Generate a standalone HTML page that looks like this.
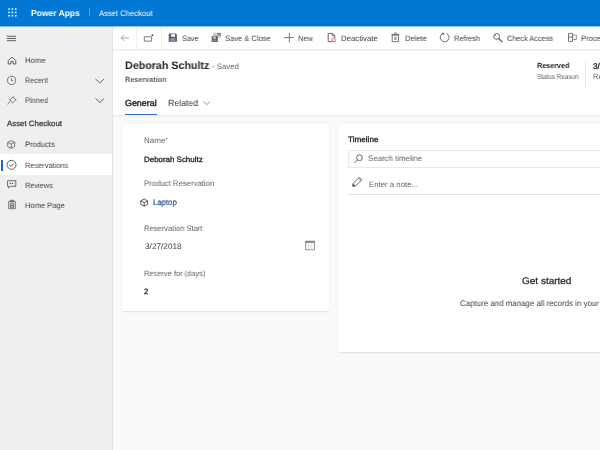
<!DOCTYPE html>
<html><head><meta charset="utf-8"><style>
html,body{margin:0;padding:0;width:600px;height:450px;overflow:hidden;background:#faf9f8}
body{position:relative;font-family:"Liberation Sans",sans-serif}
.t{position:absolute;white-space:nowrap;will-change:transform;text-rendering:geometricPrecision}
.r{position:absolute}
.i{position:absolute;overflow:visible}
</style></head><body>
<div class="r" style="left:0px;top:0px;width:600px;height:26px;background:#0078d4;"></div>
<div class="t" id="hdr_pa" style="left:30.71px;top:9.00px;font-size:8.78px;line-height:8.78px;color:#fff;font-weight:bold;transform:scaleX(0.9672);transform-origin:0 0;">Power Apps</div>
<div class="r" style="left:89px;top:7.5px;width:1px;height:8.5px;background:rgba(255,255,255,.3);"></div>
<div class="t" id="hdr_ac" style="left:98.72px;top:10.01px;font-size:8.02px;line-height:8.02px;color:#fff;font-weight:normal;transform:scaleX(0.9526);transform-origin:0 0;">Asset Checkout</div>
<div class="r" style="left:0px;top:26px;width:112px;height:424px;background:#efefef;"></div>
<div class="r" style="left:112px;top:26px;width:1px;height:424px;background:#e3e3e3;"></div>
<div class="t" id="nav_home" style="left:24.90px;top:56.91px;font-size:8.01px;line-height:8.01px;color:#3f3f3f;font-weight:normal;transform:scaleX(0.9667);transform-origin:0 0;">Home</div>
<div class="t" id="nav_recent" style="left:24.61px;top:77.00px;font-size:8.01px;line-height:8.01px;color:#3f3f3f;font-weight:normal;transform:scaleX(0.8996);transform-origin:0 0;">Recent</div>
<div class="t" id="nav_pinned" style="left:24.57px;top:97.00px;font-size:8.01px;line-height:8.01px;color:#3f3f3f;font-weight:normal;transform:scaleX(0.9395);transform-origin:0 0;">Pinned</div>
<div class="t" id="nav_grp" style="left:7.16px;top:120.01px;font-size:7.68px;line-height:7.68px;color:#3f3f3f;font-weight:normal;transform:scaleX(1.0245);transform-origin:0 0;-webkit-text-stroke:0.3px #3f3f3f;">Asset Checkout</div>
<div class="t" id="nav_products" style="left:24.50px;top:141.00px;font-size:7.85px;line-height:7.85px;color:#3f3f3f;font-weight:normal;transform:scaleX(0.9620);transform-origin:0 0;">Products</div>
<div class="r" style="left:0px;top:154px;width:112px;height:21px;background:#fff;"></div>
<div class="r" style="left:1px;top:159.5px;width:2px;height:11px;background:#0f6cbd;"></div>
<div class="t" id="nav_res" style="left:24.92px;top:162.01px;font-size:7.75px;line-height:7.75px;color:#3f3f3f;font-weight:normal;transform:scaleX(0.9577);transform-origin:0 0;">Reservations</div>
<div class="t" id="nav_reviews" style="left:24.71px;top:182.01px;font-size:7.75px;line-height:7.75px;color:#3f3f3f;font-weight:normal;transform:scaleX(0.9474);transform-origin:0 0;">Reviews</div>
<div class="t" id="nav_homepage" style="left:24.71px;top:202.01px;font-size:7.75px;line-height:7.75px;color:#3f3f3f;font-weight:normal;transform:scaleX(0.9753);transform-origin:0 0;">Home Page</div>
<div class="r" style="left:113px;top:26px;width:487px;height:23px;background:#fff;"></div>
<div class="r" style="left:113px;top:49px;width:487px;height:1px;background:#ebeae9;"></div>
<div class="r" style="left:113px;top:50px;width:487px;height:1px;background:#f6f5f4;"></div>
<div class="r" style="left:136px;top:26px;width:1px;height:23px;background:#f0efee;"></div>
<div class="r" style="left:160.5px;top:26px;width:1px;height:23px;background:#f0efee;"></div>
<div class="t" id="cmd_save" style="left:182.24px;top:35.00px;font-size:7.80px;line-height:7.80px;color:#3f3f3f;font-weight:normal;transform:scaleX(0.9298);transform-origin:0 0;">Save</div>
<div class="t" id="cmd_sc" style="left:225.19px;top:35.00px;font-size:7.80px;line-height:7.80px;color:#3f3f3f;font-weight:normal;transform:scaleX(0.9637);transform-origin:0 0;">Save &amp; Close</div>
<div class="t" id="cmd_new" style="left:298.21px;top:35.00px;font-size:7.80px;line-height:7.80px;color:#3f3f3f;font-weight:normal;transform:scaleX(0.9557);transform-origin:0 0;">New</div>
<div class="t" id="cmd_deact" style="left:340.92px;top:35.00px;font-size:7.80px;line-height:7.80px;color:#3f3f3f;font-weight:normal;transform:scaleX(0.9984);transform-origin:0 0;">Deactivate</div>
<div class="t" id="cmd_delete" style="left:404.55px;top:35.00px;font-size:7.80px;line-height:7.80px;color:#3f3f3f;font-weight:normal;transform:scaleX(0.9707);transform-origin:0 0;">Delete</div>
<div class="t" id="cmd_refresh" style="left:453.76px;top:35.00px;font-size:7.80px;line-height:7.80px;color:#3f3f3f;font-weight:normal;transform:scaleX(0.9498);transform-origin:0 0;">Refresh</div>
<div class="t" id="cmd_check" style="left:507.11px;top:35.00px;font-size:7.80px;line-height:7.80px;color:#3f3f3f;font-weight:normal;transform:scaleX(0.9382);transform-origin:0 0;">Check Access</div>
<div class="t" id="cmd_proc" style="left:580.97px;top:35.00px;font-size:7.80px;line-height:7.80px;color:#3f3f3f;font-weight:normal;transform:scaleX(0.9615);transform-origin:0 0;">Process</div>
<div class="r" style="left:113px;top:51px;width:487px;height:64.5px;background:#fff;"></div>
<div class="t" id="title" style="left:124.91px;top:61.00px;font-size:10.93px;line-height:10.93px;color:#242424;font-weight:bold;transform:scaleX(0.9793);transform-origin:0 0;">Deborah Schultz</div>
<div class="t" id="saved" style="left:212.29px;top:63.00px;font-size:7.84px;line-height:7.84px;color:#616161;font-weight:normal;transform:scaleX(0.9840);transform-origin:0 0;">- Saved</div>
<div class="t" id="entity" style="left:125.47px;top:76.01px;font-size:7.50px;line-height:7.50px;color:#5e5e5e;font-weight:bold;transform:scaleX(0.9680);transform-origin:0 0;">Reservation</div>
<div class="t" id="reserved" style="left:536.68px;top:62.11px;font-size:7.51px;line-height:7.51px;color:#242424;font-weight:bold;transform:scaleX(0.9606);transform-origin:0 0;">Reserved</div>
<div class="t" id="statusreason" style="left:536.64px;top:74.01px;font-size:7.18px;line-height:7.18px;color:#616161;font-weight:normal;transform:scaleX(0.8833);transform-origin:0 0;">Status Reason</div>
<div class="r" style="left:585px;top:60.5px;width:1px;height:27px;background:#e6e6e6;"></div>
<div class="t" id="x3" style="left:592.60px;top:62.35px;font-size:8.30px;line-height:8.30px;color:#242424;font-weight:normal;-webkit-text-stroke:0.3px #242424;">3/27/2018</div>
<div class="t" id="xre" style="left:592.80px;top:73.14px;font-size:7.60px;line-height:7.60px;color:#616161;font-weight:normal;">Reservation Start</div>
<div class="t" id="tab_general" style="left:124.87px;top:99.01px;font-size:8.85px;line-height:8.85px;color:#242424;font-weight:normal;transform:scaleX(1.0047);transform-origin:0 0;-webkit-text-stroke:0.4px #242424;">General</div>
<div class="t" id="tab_related" style="left:168.09px;top:99.01px;font-size:9.02px;line-height:9.02px;color:#383838;font-weight:normal;transform:scaleX(0.9732);transform-origin:0 0;">Related</div>
<div class="r" style="left:125px;top:114.2px;width:32px;height:1.3px;background:#2f6fc0;"></div>
<div class="r" style="left:113px;top:115.5px;width:487px;height:334.5px;background:#faf9f8;"></div>
<div class="r" style="left:113px;top:115px;width:487px;height:1px;background:#ecebea;"></div>
<div class="r" style="left:113px;top:116px;width:487px;height:1px;background:#f3f2f1;"></div>
<div class="r" style="left:121.5px;top:124.2px;width:207.5px;height:186.8px;background:#fff;box-shadow:0 0.6px 1.6px rgba(0,0,0,.11),0 0 0.6px rgba(0,0,0,.07);border-radius:1.5px"></div>
<div class="t" id="f_name" style="left:143.64px;top:137.00px;font-size:7.96px;line-height:7.96px;color:#616161;font-weight:normal;transform:scaleX(1.0062);transform-origin:0 0;">Name<span style="color:#a0525a;font-size:6.5px;vertical-align:1px">*</span></div>
<div class="t" id="f_nameval" style="left:144.03px;top:156.02px;font-size:7.78px;line-height:7.78px;color:#242424;font-weight:normal;transform:scaleX(1.0207);transform-origin:0 0;-webkit-text-stroke:0.3px #242424;">Deborah Schultz</div>
<div class="t" id="f_prod" style="left:143.66px;top:180.01px;font-size:8.01px;line-height:8.01px;color:#616161;font-weight:normal;transform:scaleX(0.9708);transform-origin:0 0;">Product Reservation</div>
<div class="t" id="f_laptop" style="left:153.15px;top:199.01px;font-size:8.16px;line-height:8.16px;color:#234e96;font-weight:normal;transform:scaleX(0.9536);transform-origin:0 0;-webkit-text-stroke:0.2px #234e96;">Laptop</div>
<div class="t" id="f_rs" style="left:143.52px;top:225.01px;font-size:7.89px;line-height:7.89px;color:#616161;font-weight:normal;transform:scaleX(0.9593);transform-origin:0 0;">Reservation Start</div>
<div class="t" id="f_date" style="left:145.37px;top:243.01px;font-size:8.22px;line-height:8.22px;color:#424242;font-weight:normal;transform:scaleX(1.0031);transform-origin:0 0;">3/27/2018</div>
<div class="t" id="f_rf" style="left:143.56px;top:270.00px;font-size:7.72px;line-height:7.72px;color:#616161;font-weight:normal;transform:scaleX(0.9656);transform-origin:0 0;">Reserve for (days)</div>
<div class="t" id="f_2" style="left:144.48px;top:288.01px;font-size:7.78px;line-height:7.78px;color:#242424;font-weight:normal;transform:scaleX(0.9615);transform-origin:0 0;-webkit-text-stroke:0.3px #242424;">2</div>
<div class="r" style="left:338px;top:124px;width:270px;height:228px;background:#fff;box-shadow:0 0.6px 1.6px rgba(0,0,0,.11),0 0 0.6px rgba(0,0,0,.07);border-radius:1.5px"></div>
<div class="t" id="tl_title" style="left:348.35px;top:136.01px;font-size:7.83px;line-height:7.83px;color:#242424;font-weight:normal;transform:scaleX(1.0400);transform-origin:0 0;-webkit-text-stroke:0.3px #242424;">Timeline</div>
<div class="r" style="left:347.5px;top:149.5px;width:260px;height:18px;background:#fff;box-sizing:border-box;border:1px solid #e8e8e8"></div>
<div class="t" id="tl_search" style="left:368.15px;top:154.91px;font-size:8.10px;line-height:8.10px;color:#616161;font-weight:normal;transform:scaleX(0.9704);transform-origin:0 0;">Search timeline</div>
<div class="t" id="tl_note" style="left:368.75px;top:181.06px;font-size:7.80px;line-height:7.80px;color:#616161;font-weight:normal;transform:scaleX(0.9924);transform-origin:0 0;">Enter a note...</div>
<div class="r" style="left:347.5px;top:194px;width:260px;height:1px;background:#e0e0e0;"></div>
<div class="t" id="gs" style="left:522.13px;top:277.01px;font-size:9.53px;line-height:9.53px;color:#242424;font-weight:normal;transform:scaleX(1.0500);transform-origin:0 0;-webkit-text-stroke:0.25px #242424;">Get started</div>
<div class="t" id="cap" style="left:460.29px;top:300.00px;font-size:8.23px;line-height:8.23px;color:#424242;font-weight:normal;transform:scaleX(0.9615);transform-origin:0 0;">Capture and manage all records in your timeline.</div>
<div class="r" style="left:0px;top:27px;width:112px;height:2px;background:#f5f6f7;"></div>
<div class="r" style="left:0px;top:25px;width:600px;height:1px;background:#066dc2;"></div>
<div class="r" style="left:0px;top:26px;width:600px;height:1px;background:rgba(0,120,212,.42);"></div>
<div class="r" style="left:0px;top:27px;width:600px;height:1px;background:rgba(0,120,212,.06);"></div>
<svg class="i" style="left:0;top:0" width="600" height="450" viewBox="0 0 600 450"><rect x="8.299999999999999" y="8.299999999999999" width="1.6" height="1.6" fill="#fff"/><rect x="11.6" y="8.299999999999999" width="1.6" height="1.6" fill="#fff"/><rect x="14.899999999999999" y="8.299999999999999" width="1.6" height="1.6" fill="#fff"/><rect x="8.299999999999999" y="11.6" width="1.6" height="1.6" fill="#fff"/><rect x="11.6" y="11.6" width="1.6" height="1.6" fill="#fff"/><rect x="14.899999999999999" y="11.6" width="1.6" height="1.6" fill="#fff"/><rect x="8.299999999999999" y="14.899999999999999" width="1.6" height="1.6" fill="#fff"/><rect x="11.6" y="14.899999999999999" width="1.6" height="1.6" fill="#fff"/><rect x="14.899999999999999" y="14.899999999999999" width="1.6" height="1.6" fill="#fff"/><path d="M6.8 36.3h9.2M6.8 38.5h9.2M6.8 40.7h9.2" stroke="#444" stroke-width="0.85"/><path d="M8.2 60.6 12 57.1l3.8 3.5V64H13.2V61.6H10.8V64H8.2z" fill="none" stroke="#555" stroke-width="0.9" stroke-linejoin="round"/><circle cx="11.6" cy="80.4" r="4.1" fill="none" stroke="#5a5a5a" stroke-width="0.8"/><path d="M11.4 78.2V80.6h1.9" fill="none" stroke="#5a5a5a" stroke-width="0.8"/><path d="M95.5 79 99.8 83 104 79" fill="none" stroke="#555" stroke-width="0.9"/><path d="M7.4 104.2 10.1 101.5M8.9 99.1 12.6 102.8M9.9 100 12.9 96.9 15.8 99.8 12.6 102.8M12.9 96.9l0.6-0.6M15.8 99.8l0.6-0.6" fill="none" stroke="#5a5a5a" stroke-width="0.8" stroke-linejoin="round"/><path d="M95.5 98.5 99.8 102.5 104 98.5" fill="none" stroke="#555" stroke-width="0.9"/><path d="M11.2 140.6 14.7 142.3v4.3L11.2 148.3 7.7 146.6V142.3z M7.7 142.3 11.2 144l3.5-1.7M11.2 144v4.3" fill="none" stroke="#5a5a5a" stroke-width="0.8" stroke-linejoin="round"/><circle cx="11.5" cy="164.8" r="4.5" fill="none" stroke="#4a4a4a" stroke-width="0.85"/><path d="M9.4 165l1.5 1.5 2.8-2.9" fill="none" stroke="#4a4a4a" stroke-width="0.9"/><path d="M7.6 180.7h8.2v5.6H10.3L8.5 188V186.3H7.6z" fill="none" stroke="#555" stroke-width="0.85" stroke-linejoin="round"/><circle cx="10.3" cy="183.4" r="0.65" fill="#444"/><circle cx="12.5" cy="183.4" r="0.65" fill="#444"/><path d="M8.7 201.3h6.6v7.4H8.7z M10.5 200.3h3v1.7h-3z M10.3 203.6h3.4v1.8h-3.4z M10.3 205.8h3.4v1.6h-3.4z" fill="none" stroke="#555" stroke-width="0.8"/><path d="M121.2 38h7.6M124.2 35 121.2 38l3 3" fill="none" stroke="#8a8a8a" stroke-width="0.8"/><path d="M144.3 36.8h7.3v4.3H144.3z" fill="none" stroke="#666" stroke-width="0.85"/><circle cx="152.4" cy="35.2" r="0.9" fill="#444"/><path d="M168.7 33.6h7.2l1 1v7.1h-8.2z" fill="#56616d"/><rect x="171.2" y="34.2" width="3.8" height="2.6" fill="#fff"/><rect x="170.3" y="38.2" width="5" height="2.6" fill="#8f9cab"/><path d="M213.2 32.7h7.6v5h-7.6z" fill="#c8c8c8"/><path d="M217.5 33.5l2.6 0 0 2.6M220 33.6l-2.5 2.5" fill="none" stroke="#555" stroke-width="0.8"/><path d="M211.7 36.2h5.2l0.9 0.9v5h-6.1z" fill="#575757"/><rect x="213.2" y="36.8" width="2.6" height="1.8" fill="#ddd"/><rect x="212.6" y="39.4" width="4.2" height="2" fill="#8a8a8a"/><path d="M289.4 32.8v9.7M283.7 37.6h10.2" stroke="#4f7a5e" stroke-width="0.9"/><path d="M328.2 33.4h4.3l2.2 2.2v6.1h-6.5z" fill="none" stroke="#555" stroke-width="0.9"/><path d="M332.3 33.4v2.4h2.4" fill="none" stroke="#555" stroke-width="0.8"/><circle cx="333.8" cy="39.8" r="2" fill="#f3d5da" stroke="#d9818f" stroke-width="0.8"/><path d="M392.2 35h6.3v6.7h-6.3z" fill="none" stroke="#666" stroke-width="0.9"/><path d="M391.4 34.7h7.9" stroke="#666" stroke-width="1"/><path d="M394.3 33.2h2.4" stroke="#666" stroke-width="1.1"/><rect x="394.1" y="36.6" width="2.6" height="3.4" fill="#aaa"/><path d="M446.5 33.4A4.4 4.4 0 1 1 443 33.3" fill="none" stroke="#666" stroke-width="0.95"/><rect x="442.3" y="32.9" width="1.9" height="1.6" fill="#555"/><circle cx="496.6" cy="36.4" r="2.9" fill="none" stroke="#555" stroke-width="0.9"/><path d="M498.6 38.5l3.8 3.6" stroke="#555" stroke-width="1.3"/><circle cx="495.6" cy="35.5" r="0.6" fill="#555"/><path d="M568.5 33.4h4v8h-4z M568.5 37.2h4" fill="none" stroke="#666" stroke-width="0.9"/><path d="M572.8 34.9h3.6v4.5h-2" fill="none" stroke="#888" stroke-width="0.8"/><circle cx="574.4" cy="39.6" r="0.8" fill="#4a6a8a"/><path d="M203.5 101.5 206.7 104.7 210 101.5" fill="none" stroke="#777" stroke-width="0.8"/><path d="M144.2 199 147.6 200.8v3.6L144.2 206.2 140.8 204.4V200.8z M140.8 200.8 144.2 202.6l3.4-1.8M144.2 202.6v3.6" fill="none" stroke="#444" stroke-width="0.85" stroke-linejoin="round"/><path d="M305.6 241.2h8.9v8.6h-8.9z" fill="none" stroke="#7a7a7a" stroke-width="0.8"/><rect x="305.6" y="241.2" width="8.9" height="1.6" fill="#7a7a7a"/><path d="M308.6 243v6.6M311.6 243v6.6M305.6 246.2h8.9" stroke="#d8d8d8" stroke-width="0.6"/><circle cx="359.5" cy="157.7" r="2.9" fill="none" stroke="#555" stroke-width="0.9"/><path d="M357.5 159.8 354.3 163.1" stroke="#555" stroke-width="0.9"/><path d="M352.6 186.3 353.2 183.4 359.4 177.2 361.9 179.7 355.7 185.9z" fill="#fff" stroke="#555" stroke-width="0.9" stroke-linejoin="round"/><path d="M352.6 186.3 353.2 183.4 355.7 185.9z" fill="#555"/><path d="M358.4 178.2l2.5 2.5" stroke="#555" stroke-width="0.8"/></svg>
</body></html>
